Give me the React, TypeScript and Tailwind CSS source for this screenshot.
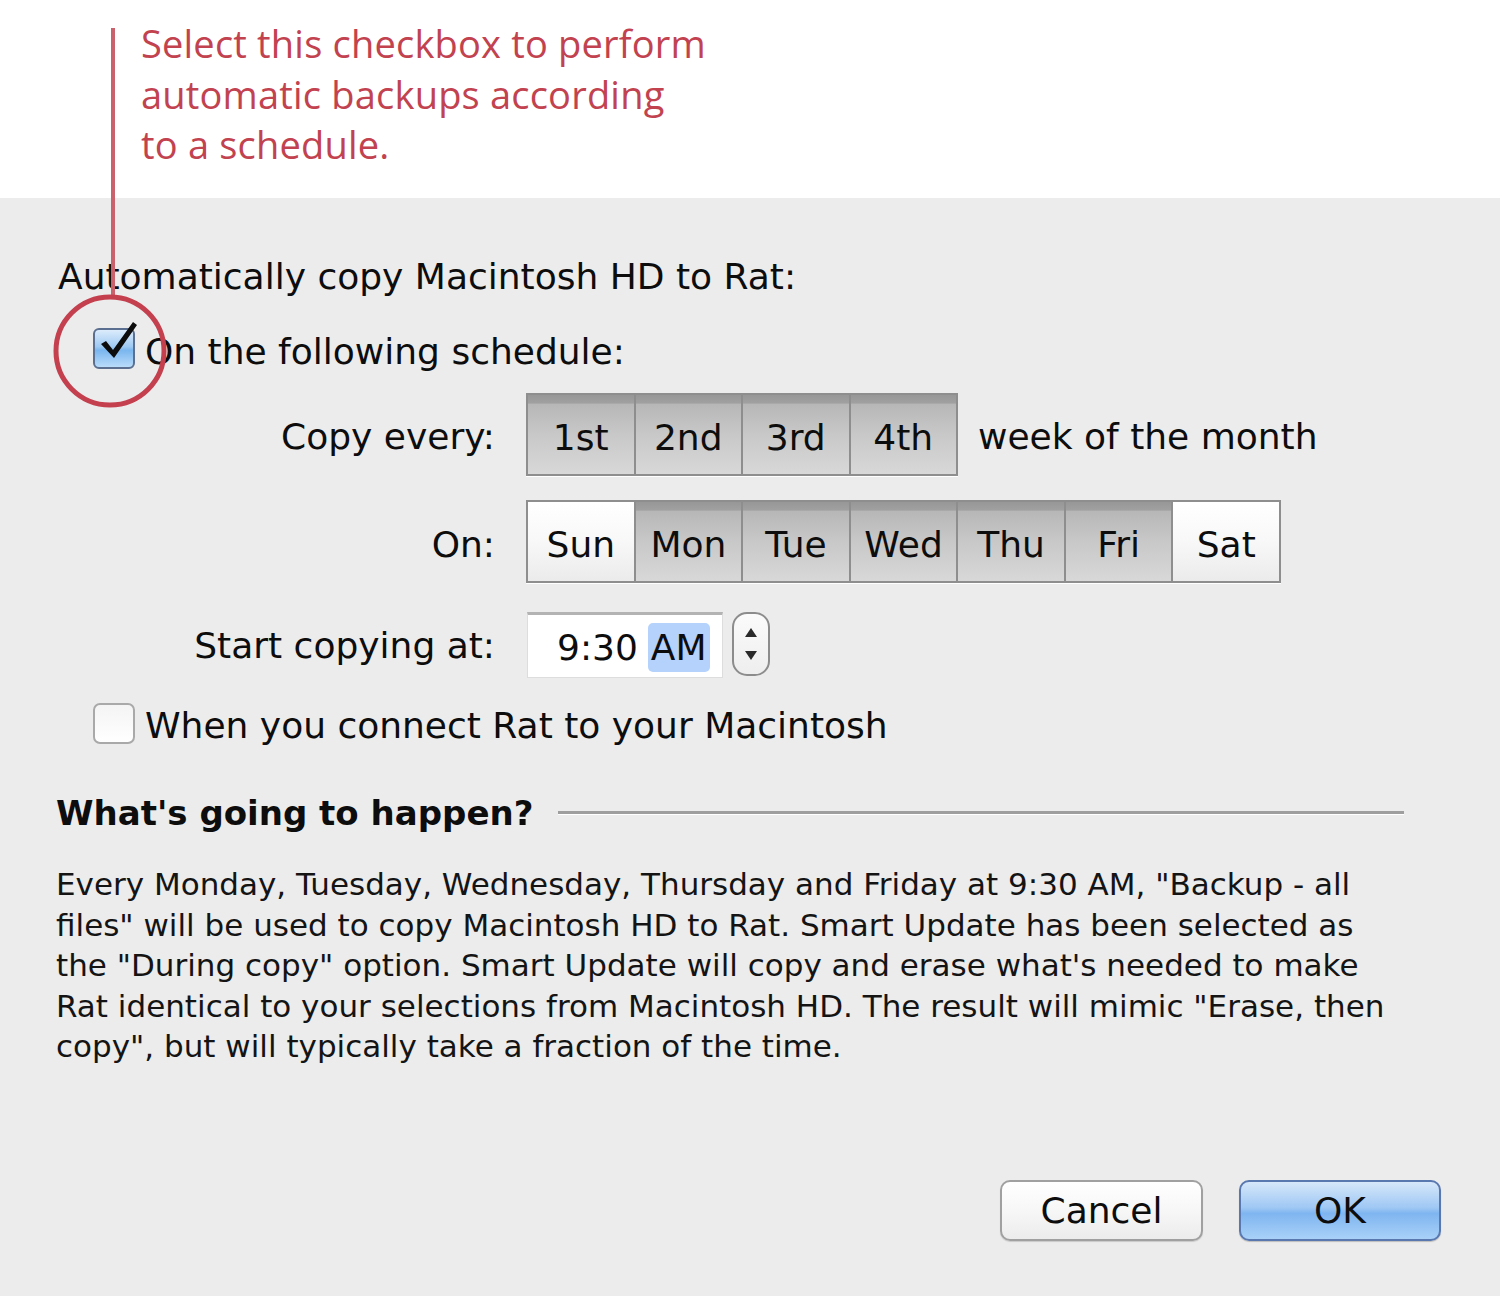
import React from 'react';

const ui = "font-['DejaVu_Sans','Lucida_Grande',sans-serif]";

const segOn =
    'bg-[linear-gradient(to_bottom,#979797_0%,#a0a0a0_10%,#b7b7b7_12%,#c8c8c8_50%,#d8d8d8_100%)]';
const segOff = 'bg-[linear-gradient(to_bottom,#ffffff_0%,#f8f8f8_50%,#ebebeb_100%)]';

const weeks = [
    { label: '1st', on: true },
    { label: '2nd', on: true },
    { label: '3rd', on: true },
    { label: '4th', on: true },
];

const days = [
    { label: 'Sun', on: false },
    { label: 'Mon', on: true },
    { label: 'Tue', on: true },
    { label: 'Wed', on: true },
    { label: 'Thu', on: true },
    { label: 'Fri', on: true },
    { label: 'Sat', on: false },
];

const summary = [
    'Every Monday, Tuesday, Wednesday, Thursday and Friday at 9:30 AM, "Backup - all',
    'files" will be used to copy Macintosh HD to Rat. Smart Update has been selected as',
    'the "During copy" option. Smart Update will copy and erase what\'s needed to make',
    'Rat identical to your selections from Macintosh HD. The result will mimic "Erase, then',
    'copy", but will typically take a fraction of the time.',
];

const Segmented = ({ items, width }: { items: { label: string; on: boolean }[]; width: string }) => (
    <div className={`flex h-[83px] ${width} border-2 border-[#8e8e8e] shadow-[0_1px_0_#ffffff]`}>
        {items.map((s, i) => (
            <div
                key={s.label}
                className={`flex-1 flex items-center justify-center pt-[6px] leading-[44px] ${
                    i > 0 ? 'border-l-2 border-[#8e8e8e]' : ''
                } ${s.on ? segOn : segOff}`}
            >
                {s.label}
            </div>
        ))}
    </div>
);

const Checkbox = ({ checked }: { checked: boolean }) => (
    <div className="relative w-[42px] h-[41px] shrink-0">
        {checked ? (
            <div className="w-full h-full rounded-[6px] border-2 border-[#5b6f90] bg-[linear-gradient(to_bottom,#dcecfc_0%,#9fcaf3_45%,#7ab6ef_55%,#b9dcfa_100%)]" />
        ) : (
            <div className="w-full h-full rounded-[7px] border-2 border-[#a9a9a9] bg-[linear-gradient(to_bottom,#f4f4f4,#ffffff)]" />
        )}
        {checked && (
            <svg className="absolute left-0 top-[-8px] overflow-visible" width="46" height="46" viewBox="0 0 46 46">
                <path d="M8 24 L13 21 L20 30 L40 2 L44 5 L21 38 Z" fill="#0c0c0c" />
            </svg>
        )}
    </div>
);

export default function App() {
    return (
        <div className={`relative w-[1500px] h-[1296px] overflow-hidden bg-[#ececec] flex flex-col text-[#0d0d0d] ${ui}`}>
            {/* Callout */}
            <div className="h-[198px] shrink-0 bg-white pl-[141px] pt-[18px] font-['Open_Sans',sans-serif] text-[38px] tracking-[0.2px] leading-[50.5px] text-[#c2424f]">
                <div>Select this checkbox to perform</div>
                <div>automatic backups according</div>
                <div>to a schedule.</div>
            </div>

            {/* Dialog body */}
            <div className="flex-1 flex flex-col pl-[56px] pt-[57px] text-[36px]">
                <div className="pl-[2px] leading-[44px]">Automatically copy Macintosh HD to Rat:</div>

                <div className="flex items-start mt-[29px] pl-[37px]">
                    <Checkbox checked />
                    <div className="ml-[10px] mt-[2px] leading-[44px]">On the following schedule:</div>
                </div>

                <div className="flex items-start mt-[19px]">
                    <div className="w-[439px] text-right pt-[22px] leading-[44px]">Copy every:</div>
                    <div className="ml-[31px]">
                        <Segmented items={weeks} width="w-[432px]" />
                    </div>
                    <div className="ml-[20px] pt-[22px] leading-[44px]">week of the month</div>
                </div>

                <div className="flex items-start mt-[24px]">
                    <div className="w-[439px] text-right pt-[23px] leading-[44px]">On:</div>
                    <div className="ml-[31px]">
                        <Segmented items={days} width="w-[755px]" />
                    </div>
                </div>

                <div className="flex items-start mt-[29px]">
                    <div className="w-[439px] text-right pt-[12px] leading-[44px]">Start copying at:</div>
                    <div className="ml-[32px] w-[196px] h-[66px] bg-white border-t-[3px] border-t-[#b3b3b3] border-x border-b border-[#dddddd] flex items-center pl-[29px] pt-[3px]">
                        <span className="leading-[44px]">9:30</span>
                        <span className="ml-[10px] px-[3px] h-[49px] flex items-center rounded-[5px] bg-[#b4d2fc] leading-[44px]">AM</span>
                    </div>
                    <div className="ml-[9px] w-[38px] h-[64px] rounded-[15px] border-2 border-[#8c8c8c] bg-[linear-gradient(to_bottom,#fbfbfb,#eeeeee)] flex flex-col items-center justify-center gap-[14px]">
                        <svg width="12" height="9" viewBox="0 0 12 9">
                            <path d="M6 0 L12 9 L0 9 Z" fill="#2a2a2a" />
                        </svg>
                        <svg width="12" height="9" viewBox="0 0 12 9">
                            <path d="M0 0 L12 0 L6 9 Z" fill="#2a2a2a" />
                        </svg>
                    </div>
                </div>

                <div className="flex items-start mt-[25px] pl-[37px]">
                    <Checkbox checked={false} />
                    <div className="ml-[10px] mt-[1px] leading-[44px]">When you connect Rat to your Macintosh</div>
                </div>

                <div className="flex items-center mt-[45px] pr-[96px]">
                    <div className="font-bold text-[34px] leading-[40px]">What's going to happen?</div>
                    <div className="flex-1 ml-[25px] h-[4px] border-t-[3px] border-[#9e9e9e] border-b border-b-white" />
                </div>

                <div className="mt-[31px] text-[31px] leading-[40.5px] text-[#141414]">
                    {summary.map((line) => (
                        <div key={line} className="whitespace-nowrap">
                            {line}
                        </div>
                    ))}
                </div>

                <div className="mt-auto pb-[55px] pr-[59px] flex justify-end gap-[36px]">
                    <button className="w-[203px] h-[61px] rounded-[10px] border-2 border-[#a0a0a0] bg-[linear-gradient(to_bottom,#ffffff_0%,#f7f7f7_50%,#ececec_100%)] shadow-[0_1px_1px_rgba(0,0,0,0.15)] leading-[44px] text-[#0d0d0d]">
                        Cancel
                    </button>
                    <button className="w-[202px] h-[61px] rounded-[10px] border-2 border-[#5a78b0] bg-[linear-gradient(to_bottom,#d6e7fa_0%,#9fc8f4_45%,#7fb5f0_55%,#a9d1f8_100%)] shadow-[0_1px_1px_rgba(0,0,0,0.2)] leading-[44px] text-[#0d0d0d]">
                        OK
                    </button>
                </div>
            </div>

            {/* Callout pointer */}
            <svg className="absolute inset-0 pointer-events-none" width="1500" height="1296">
                <line x1="113" y1="28" x2="113" y2="296" stroke="#c9626d" strokeWidth="4" />
                <circle cx="110" cy="351" r="54" fill="none" stroke="#c4404f" strokeWidth="5" />
            </svg>
        </div>
    );
}
